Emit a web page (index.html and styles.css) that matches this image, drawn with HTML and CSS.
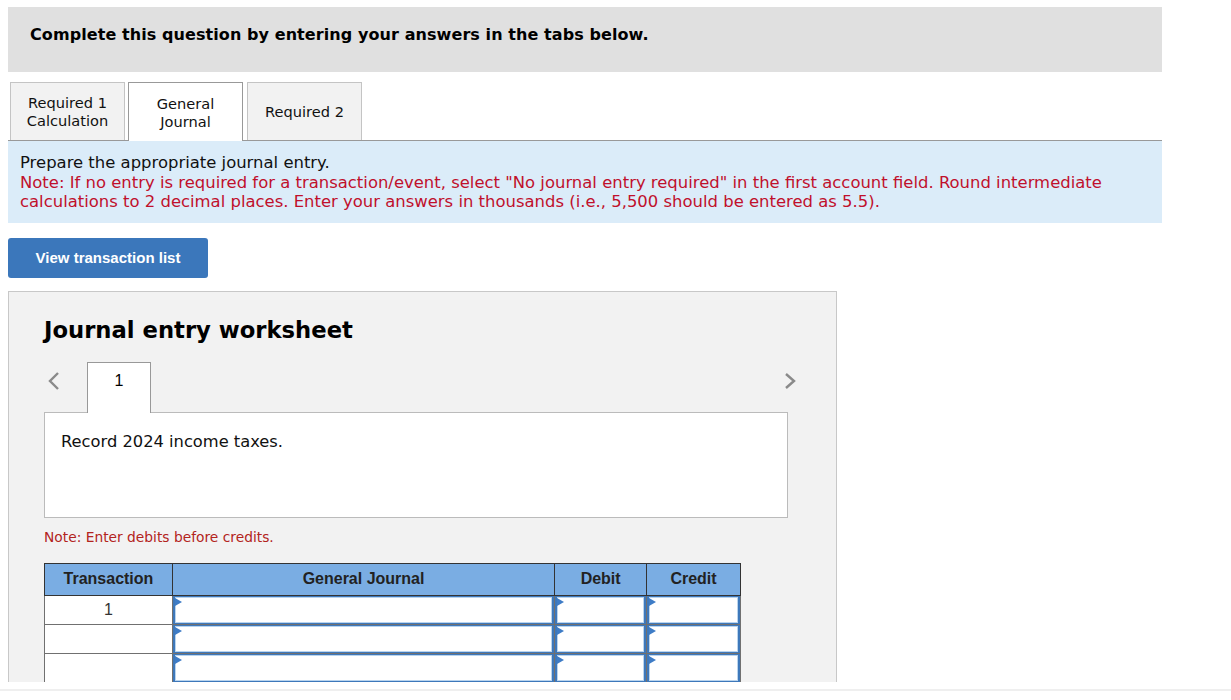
FILE: index.html
```html
<!DOCTYPE html>
<html>
<head>
<meta charset="utf-8">
<link rel="stylesheet" href="styles.css">
</head>
<body>
<div class="page">
  <div class="banner">Complete this question by entering your answers in the tabs below.</div>

  <div class="tabs">
    <div class="tab">Required 1<br>Calculation</div>
    <div class="tab active">General<br>Journal</div>
    <div class="tab">Required 2</div>
  </div>

  <div class="info">
    <div class="info-main">Prepare the appropriate journal entry.</div>
    <div class="info-note">Note: If no entry is required for a transaction/event, select "No journal entry required" in the first account field. Round intermediate calculations to 2 decimal places. Enter your answers in thousands (i.e., 5,500 should be entered as 5.5).</div>
  </div>

  <button class="btn">View transaction list</button>

  <div class="panel">
    <h2 class="ws-title">Journal entry worksheet</h2>
    <div class="nav">
      <span class="chev chev-left"><svg width="14" height="20" viewBox="0 0 14 20"><path d="M11 2 L3 10 L11 18" fill="none" stroke="#8a8a8a" stroke-width="2.4"/></svg></span>
      <div class="num-tab">1</div>
      <span class="chev chev-right"><svg width="14" height="20" viewBox="0 0 14 20"><path d="M3 3 L11 10 L3 17" fill="none" stroke="#8a8a8a" stroke-width="2.4"/></svg></span>
    </div>
    <div class="desc">Record 2024 income taxes.</div>
    <div class="note">Note: Enter debits before credits.</div>

    <table class="journal">
      <thead>
        <tr>
          <th class="c-tr">Transaction</th>
          <th class="c-gj">General Journal</th>
          <th class="c-dr">Debit</th>
          <th class="c-cr">Credit</th>
        </tr>
      </thead>
      <tbody>
        <tr>
          <td class="tr-cell">1</td>
          <td class="in"><div class="field"><span class="tri"></span></div></td>
          <td class="in"><div class="field"><span class="tri"></span></div></td>
          <td class="in"><div class="field"><span class="tri"></span></div></td>
        </tr>
        <tr>
          <td class="tr-cell"></td>
          <td class="in"><div class="field"><span class="tri"></span></div></td>
          <td class="in"><div class="field"><span class="tri"></span></div></td>
          <td class="in"><div class="field"><span class="tri"></span></div></td>
        </tr>
        <tr>
          <td class="tr-cell"></td>
          <td class="in"><div class="field"><span class="tri"></span></div></td>
          <td class="in"><div class="field"><span class="tri"></span></div></td>
          <td class="in"><div class="field"><span class="tri"></span></div></td>
        </tr>
      </tbody>
    </table>
  </div>
</div>
<div class="footer-line"></div>
</body>
</html>
```

FILE: styles.css
```css
* { box-sizing: border-box; }
html, body { margin: 0; padding: 0; background: #fff; }
body {
  font-family: "DejaVu Sans", Verdana, sans-serif;
  color: #000;
  height: 700px;
  overflow: hidden;
}
.page {
  padding: 7px 0 0 8px;
  width: 1162px;
}
.banner {
  height: 65px;
  background: #e0e0e0;
  padding: 17px 0 0 22px;
  font-weight: bold;
  font-size: 16px;
  letter-spacing: 0.08px;
  line-height: 21px;
}
.tabs {
  display: flex;
  align-items: flex-end;
  margin-top: 10px;
  padding-left: 2px;
  border-bottom: 1px solid #999;
  height: 59px;
}
.tab {
  width: 115px;
  height: 58px;
  margin-right: 3px;
  background: #f2f2f2;
  border: 1px solid #c4c4c4;
  border-bottom: none;
  display: flex;
  align-items: center;
  justify-content: center;
  text-align: center;
  font-size: 14.6px;
  line-height: 18px;
  padding-top: 1px;
  color: #111;
}
.tab.active {
  background: #fff;
  border-color: #999;
  height: 59px;
  margin-bottom: -1px;
  margin-right: 4px;
}
.info {
  background: #dbecf9;
  padding: 12px 12px 11px 12px;
  font-size: 16.45px;
  line-height: 19.5px;
}
.info-main { color: #111; }
.info-note { color: #c0102c; }
.btn {
  display: block;
  margin-top: 15px;
  width: 200px;
  height: 40px;
  border: none;
  border-radius: 3px;
  background: #3b77bb;
  color: #fff;
  font-family: "Liberation Sans", Arial, sans-serif;
  font-weight: bold;
  font-size: 15px;
  padding: 0;
}
.panel {
  margin-top: 13px;
  width: 829px;
  height: 391px;
  background: #f2f2f2;
  border: 1px solid #c8c8c8;
  border-bottom: none;
  padding: 0 0 0 35px;
  overflow: hidden;
}
.ws-title {
  margin: 24px 0 0 0;
  font-size: 22.7px;
  line-height: 28px;
  font-weight: bold;
  color: #000;
}
.nav {
  display: flex;
  align-items: flex-start;
  margin-top: 18px;
  height: 50px;
}
.chev { display: block; width: 14px; height: 20px; margin-top: 9px; }
.chev-left { margin-left: 3px; margin-right: 26px; }
.chev-right { margin-left: 632px; }
.num-tab {
  width: 64px;
  height: 51px;
  background: #fff;
  border: 1px solid #999;
  border-bottom: none;
  text-align: center;
  font-family: "Liberation Sans", Arial, sans-serif;
  font-size: 16px;
  padding-top: 9px;
  position: relative;
  z-index: 1;
}
.desc {
  width: 744px;
  height: 106px;
  background: #fff;
  border: 1px solid #bbb;
  padding: 19px 16px;
  font-size: 16.3px;
  line-height: 20px;
  color: #111;
}
.note {
  margin-top: 10px;
  font-size: 13.8px;
  line-height: 18px;
  color: #b3241d;
}
.journal {
  margin-top: 17px;
  border-collapse: collapse;
  width: 697px;
  font-family: "Liberation Sans", Arial, sans-serif;
}
.journal th {
  background: #7aade3;
  border: 1px solid #333;
  height: 32px;
  font-size: 16px;
  font-weight: bold;
  color: #222;
  padding: 0;
}
.c-tr { width: 128px; }
.c-gj { width: 383px; }
.c-dr { width: 92px; }
.c-cr { width: 94px; }
.journal td {
  padding: 0;
  border: 1px solid #707070;
}
.tr-cell {
  background: #fff;
  text-align: center;
  font-size: 16px;
  color: #333;
  vertical-align: top;
  height: 28px;
  padding-top: 5px !important;
}
.field {
  position: relative;
  height: 28px;
  background: #fff;
  border: 2px solid #3e78ba;
  border-top-width: 1px;
  border-bottom-width: 1px;
  box-shadow: inset 0 0 0 1px #b9d4ee;
}
.tri {
  position: absolute;
  left: 0;
  top: 1px;
  width: 0;
  height: 0;
  border-top: 4px solid transparent;
  border-bottom: 4px solid transparent;
  border-left: 7px solid #3e7cc6;
}
.footer-line {
  position: absolute;
  left: 0;
  top: 689px;
  width: 1231px;
  height: 2px;
  background: #efefef;
}
```
